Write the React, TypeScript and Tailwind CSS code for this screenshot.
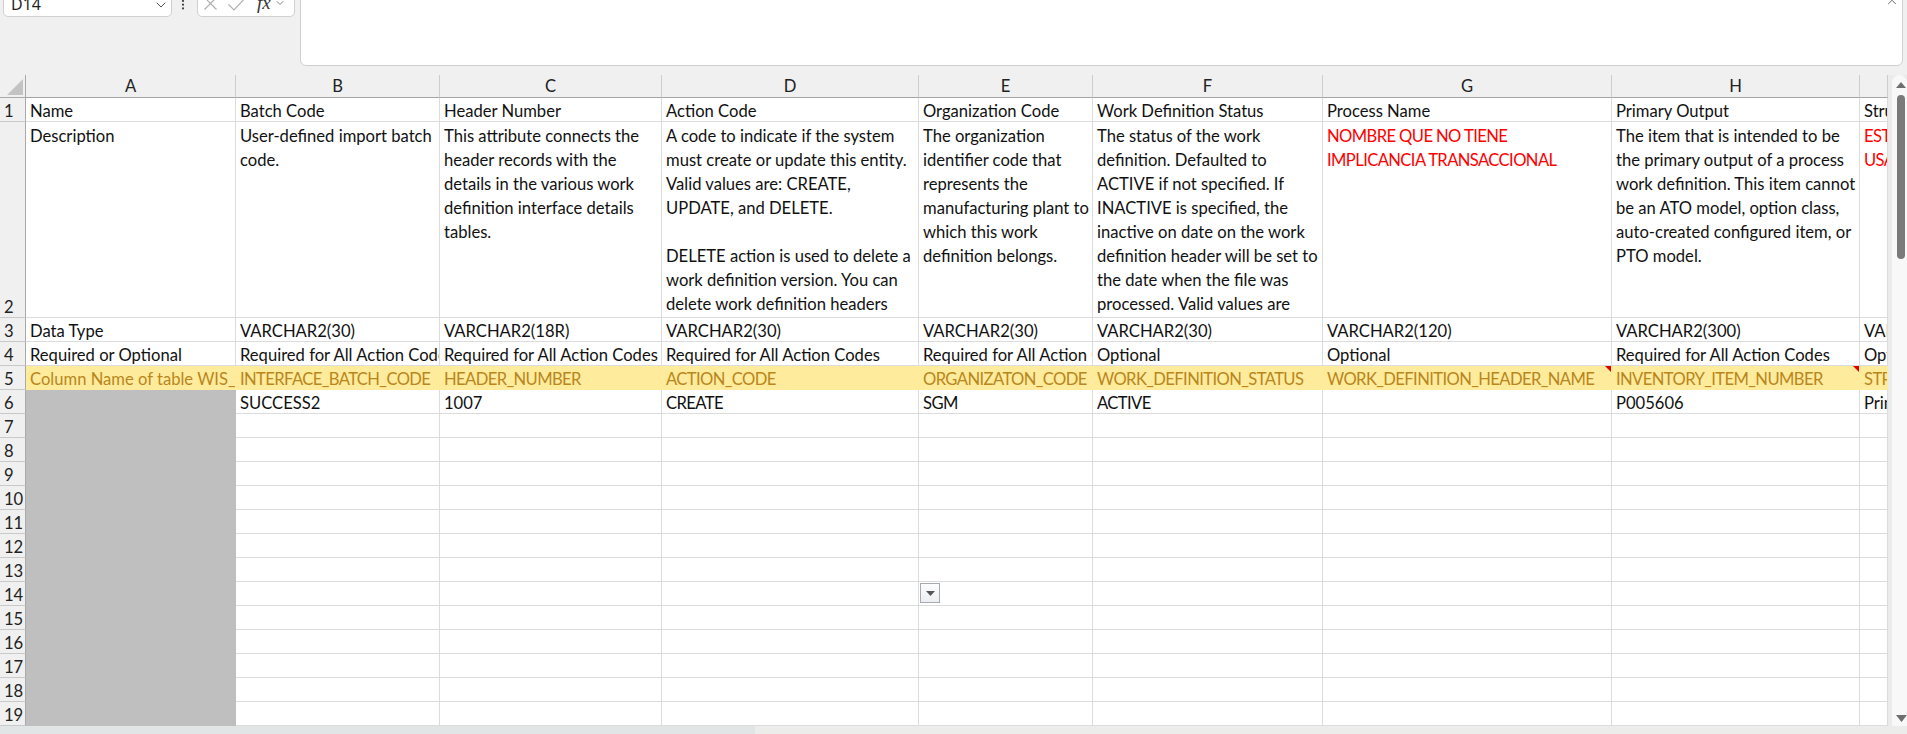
import { ChevronDown, ChevronUp } from 'lucide-react';

const cols = [
  { letter: 'A', w: 'w-[210px]' },
  { letter: 'B', w: 'w-[204px]' },
  { letter: 'C', w: 'w-[222px]' },
  { letter: 'D', w: 'w-[257px]' },
  { letter: 'E', w: 'w-[174px]' },
  { letter: 'F', w: 'w-[230px]' },
  { letter: 'G', w: 'w-[289px]' },
  { letter: 'H', w: 'w-[248px]' },
  { letter: '', w: 'w-[28px]' },
];

type Value = string | string[];

type RowData = {
  n: number;
  cells: Value[];
  tall?: boolean;
  yellow?: boolean;
  red?: number[];
  notes?: number[];
  dropdown?: number;
};

const rows: RowData[] = [
  {
    n: 1,
    cells: [
      'Name',
      'Batch Code',
      'Header Number',
      'Action Code',
      'Organization Code',
      'Work Definition Status',
      'Process Name',
      'Primary Output',
      'Structure Name',
    ],
  },
  {
    n: 2,
    tall: true,
    red: [6, 8],
    cells: [
      ['Description'],
      ['User-defined import batch', 'code.'],
      [
        'This attribute connects the',
        'header records with the',
        'details in the various work',
        'definition interface details',
        'tables.',
      ],
      [
        'A code to indicate if the system',
        'must create or update this entity.',
        'Valid values are: CREATE,',
        'UPDATE, and DELETE.',
        '',
        'DELETE action is used to delete a',
        'work definition version. You can',
        'delete work definition headers',
      ],
      [
        'The organization',
        'identifier code that',
        'represents the',
        'manufacturing plant to',
        'which this work',
        'definition belongs.',
      ],
      [
        'The status of the work',
        'definition. Defaulted to',
        'ACTIVE if not specified. If',
        'INACTIVE is specified, the',
        'inactive on date on the work',
        'definition header will be set to',
        'the date when the file was',
        'processed. Valid values are',
      ],
      ['NOMBRE QUE NO TIENE', 'IMPLICANCIA TRANSACCIONAL'],
      [
        'The item that is intended to be',
        'the primary output of a process',
        'work definition. This item cannot',
        'be an ATO model, option class,',
        'auto-created configured item, or',
        'PTO model.',
      ],
      ['ESTRUCTURA', 'USADA'],
    ],
  },
  {
    n: 3,
    cells: [
      'Data Type',
      'VARCHAR2(30)',
      'VARCHAR2(18R)',
      'VARCHAR2(30)',
      'VARCHAR2(30)',
      'VARCHAR2(30)',
      'VARCHAR2(120)',
      'VARCHAR2(300)',
      'VARCHAR2(30)',
    ],
  },
  {
    n: 4,
    cells: [
      'Required or Optional',
      'Required for All Action Codes',
      'Required for All Action Codes',
      'Required for All Action Codes',
      'Required for All Action Codes',
      'Optional',
      'Optional',
      'Required for All Action Codes',
      'Optional',
    ],
  },
  {
    n: 5,
    yellow: true,
    notes: [6, 7],
    cells: [
      'Column Name of table WIS_WORK_DEFINITIONS_INT',
      'INTERFACE_BATCH_CODE',
      'HEADER_NUMBER',
      'ACTION_CODE',
      'ORGANIZATON_CODE',
      'WORK_DEFINITION_STATUS',
      'WORK_DEFINITION_HEADER_NAME',
      'INVENTORY_ITEM_NUMBER',
      'STRUCTURE_NAME',
    ],
  },
  {
    n: 6,
    cells: ['', 'SUCCESS2', '1007', 'CREATE', 'SGM', 'ACTIVE', '', 'P005606', 'Primary'],
  },
];

for (let n = 7; n <= 19; n++) {
  rows.push({ n, cells: ['', '', '', '', '', '', '', '', ''], dropdown: n === 14 ? 3 : undefined });
}

// Calibri caps are narrower than Lato's, so tighten all-caps strings a bit
const isCaps = (s: string) => /[A-Z]/.test(s) && /^[A-Z_ ,.]+$/.test(s);
const fit = (s: string) => (isCaps(s) ? 'tracking-[-0.6px]' : '');

function TopBar() {
  return (
    <div className="flex h-[75px] items-start font-['Noto_Sans',sans-serif]">
      <div className="-mt-[5px] ml-[3px] flex h-[22px] w-[169px] shrink-0 items-start justify-between rounded-[5px] border border-[#d0d0d0] bg-white pl-[7px] pr-[2px]">
        <span className="text-[16px] leading-[16px] text-[#1f1f1f]">D14</span>
        <ChevronDown className="mt-[1px] h-[16px] w-[16px] text-[#555]" strokeWidth={1.5} />
      </div>
      <svg className="ml-[8px] shrink-0" width="6" height="12" viewBox="0 0 6 12">
        <circle cx="3" cy="1" r="1.1" fill="#444" />
        <circle cx="3" cy="4.7" r="1.1" fill="#444" />
        <circle cx="3" cy="8.4" r="1.1" fill="#444" />
      </svg>
      <div className="-mt-[5px] ml-[11px] flex h-[22px] w-[98px] shrink-0 items-start rounded-[5px] border border-[#d0d0d0] bg-white pl-[6px]">
        <svg className="mt-[1px] shrink-0" width="13" height="13" viewBox="0 0 13 13">
          <path d="M0.5 0.5 12.5 12.5M12.5 0.5 0.5 12.5" stroke="#b0b0b0" strokeWidth="1.2" fill="none" />
        </svg>
        <svg className="ml-[11px] mt-[2px] shrink-0" width="17" height="13" viewBox="0 0 17 13">
          <path d="M0.5 6.5 6 12 16.5 0.7" stroke="#b0b0b0" strokeWidth="1.2" fill="none" />
        </svg>
        <span className="-mt-[3px] ml-[12px] font-['Liberation_Serif',serif] text-[19px] italic leading-[19px] text-[#333]">
          fx
        </span>
        <ChevronDown className="ml-[3px] mt-[1px] h-[12px] w-[12px] text-[#666]" strokeWidth={1.6} />
      </div>
      <div className="-mt-[8px] ml-[5px] mr-[4px] flex h-[74px] flex-1 items-start justify-end rounded-b-[6px] border border-[#cfcfcf] bg-white pr-[3px]">
        <ChevronUp className="mt-[2px] h-[14px] w-[14px] text-[#555]" strokeWidth={1.5} />
      </div>
    </div>
  );
}

function ColumnHeader() {
  return (
    <div className="flex h-[23px] bg-[#f0f0f0]">
      <div className="flex w-[26px] shrink-0 items-end justify-end border-b border-r border-[#a9a9a9] pb-[2px] pr-[2px]">
        <svg width="16" height="16" viewBox="0 0 16 16">
          <polygon points="16,0 16,16 0,16" fill="#c3c3c3" />
        </svg>
      </div>
      {cols.map((c, i) => (
        <div
          key={i}
          className={`${c.w} shrink-0 border-b border-r border-b-[#a3a3a3] border-r-[#cdcdcd] pt-[1px] text-center leading-[21px] text-[#222]`}
        >
          {c.letter}
        </div>
      ))}
    </div>
  );
}

function DropdownButton() {
  return (
    <div className="absolute -right-[22px] top-[1px] z-10 flex h-[20px] w-[20px] items-center justify-center border border-[#a6abb2] bg-gradient-to-b from-[#fdfdfd] to-[#eceef1]">
      <svg width="9" height="5" viewBox="0 0 9 5">
        <polygon points="0,0 9,0 4.5,5" fill="#555" />
      </svg>
    </div>
  );
}

function Row({ row }: { row: RowData }) {
  const h = row.tall ? 'h-[196px]' : 'h-[24px]';
  return (
    <div className={`flex ${h}`}>
      <div className="flex w-[26px] shrink-0 items-end border-b border-r border-b-[#c9c9c9] border-r-[#a9a9a9] bg-[#f0f0f0] pl-[4px] leading-[20px] text-[#222]">
        {row.n}
      </div>
      {cols.map((c, i) => {
        const value = row.cells[i];
        const grayA = i === 0 && row.n >= 6;
        let tone = 'bg-white border-[#dcdcdc]';
        if (row.yellow) tone = 'bg-[#ffeb9c] border-[#ffeb9c] text-[#b9861c]';
        else if (grayA) tone = 'bg-[#bfbfbf] border-[#bfbfbf]';
        const red = row.red?.includes(i) ? 'text-[#ff0000]' : '';
        const clip = row.dropdown === i ? '' : 'overflow-hidden';
        return (
          <div
            key={i}
            className={`${c.w} relative shrink-0 ${clip} whitespace-nowrap border-b border-r px-[4px] ${tone} ${red}`}
          >
            {Array.isArray(value) ? (
              <div className="pt-[2px]">
                {value.map((line, j) => (
                  <div key={j} className={`h-[24px] leading-[24px] ${fit(line)}`}>
                    {line}
                  </div>
                ))}
              </div>
            ) : (
              <div className={`pt-[3px] leading-[20px] ${fit(value)}`}>{value}</div>
            )}
            {row.notes?.includes(i) && (
              <svg className="absolute right-0 top-0" width="6" height="6" viewBox="0 0 6 6">
                <polygon points="0,0 6,0 6,6" fill="#e00000" />
              </svg>
            )}
            {row.dropdown === i && <DropdownButton />}
          </div>
        );
      })}
    </div>
  );
}

function VScroll() {
  return (
    <div className="flex w-[19px] shrink-0 bg-[#ebebeb]">
      <div className="ml-[4px] flex flex-1 flex-col items-center rounded-t-[8px] bg-[#f8f8f8] pb-[4px] pl-[3px]">
        <svg className="mt-[7px]" width="10" height="6" viewBox="0 0 10 6">
          <polygon points="5,0 10,6 0,6" fill="#6e6e6e" />
        </svg>
        <div className="mt-[7px] h-[164px] w-[8px] rounded-full bg-[#7a7a7a]" />
        <div className="flex-1" />
        <svg width="11" height="7" viewBox="0 0 11 7">
          <polygon points="0,0 11,0 5.5,7" fill="#6e6e6e" />
        </svg>
      </div>
    </div>
  );
}

export default function App() {
  return (
    <div className="h-[734px] w-[1907px] overflow-hidden bg-[#f1f0f0] font-[Lato,sans-serif] text-[16.6px] text-[#111]">
      <TopBar />
      <div className="flex h-[651px]">
        <div className="w-[1888px] shrink-0 overflow-hidden bg-white">
          <ColumnHeader />
          {rows.map((r) => (
            <Row key={r.n} row={r} />
          ))}
        </div>
        <VScroll />
      </div>
      <div className="flex h-[8px]">
        <div className="w-[755px] bg-[#e2e5e5]" />
        <div className="flex-1 bg-[#ececeb]" />
      </div>
    </div>
  );
}
